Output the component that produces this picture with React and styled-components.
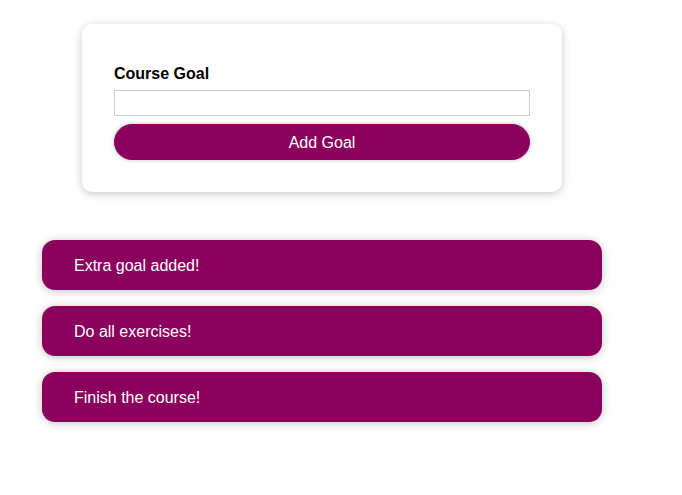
import React from 'react';
import styled, { createGlobalStyle } from 'styled-components';

const GlobalStyle = createGlobalStyle`
  * {
    box-sizing: border-box;
  }
  body {
    margin: 0;
    font-family: "Liberation Sans", Arial, sans-serif;
    background: #ffffff;
  }
`;

const Page = styled.div`
  width: 644px;
  display: flex;
  flex-direction: column;
  align-items: center;
  padding-top: 24px;
`;

const FormCard = styled.form`
  width: 480px;
  padding: 32px;
  background: #ffffff;
  border-radius: 10px;
  box-shadow: 0 2px 8px rgba(0, 0, 0, 0.22);
`;

const FormControl = styled.div`
  margin: 8px 0;
`;

const Label = styled.label`
  display: block;
  font-weight: bold;
  font-size: 16px;
  line-height: 20px;
  color: #000;
  margin-bottom: 6px;
`;

const Input = styled.input`
  display: block;
  width: 100%;
  height: 26px;
  border: 1px solid #ccc;
  font: inherit;
  padding: 0 4px;
  outline: none;
`;

const SubmitButton = styled.button`
  display: block;
  width: 100%;
  height: 36px;
  padding: 2px 0 0;
  font: inherit;
  font-size: 16px;
  color: #fff;
  background: #8b005d;
  border: 1px solid #8b005d;
  border-radius: 18px;
  box-shadow: 0 0 4px rgba(0, 0, 0, 0.26);
  cursor: pointer;
`;

const GoalList = styled.ul`
  width: 560px;
  list-style: none;
  margin: 32px 0 0;
  padding: 0;
`;

const GoalItem = styled.li`
  margin: 16px 0;
  padding: 17px 32px 15px;
  height: 50px;
  font-size: 16px;
  line-height: 18px;
  color: #fff;
  background: #8b005d;
  border-radius: 13px;
  box-shadow: 0 1px 8px rgba(0, 0, 0, 0.25);
`;

const goals = ['Extra goal added!', 'Do all exercises!', 'Finish the course!'];

export default function App() {
  return (
    <>
      <GlobalStyle />
      <Page>
        <FormCard onSubmit={(e) => e.preventDefault()}>
          <FormControl>
            <Label htmlFor="goal">Course Goal</Label>
            <Input id="goal" type="text" />
          </FormControl>
          <SubmitButton type="submit">Add Goal</SubmitButton>
        </FormCard>
        <GoalList>
          {goals.map((g) => (
            <GoalItem key={g}>{g}</GoalItem>
          ))}
        </GoalList>
      </Page>
    </>
  );
}
